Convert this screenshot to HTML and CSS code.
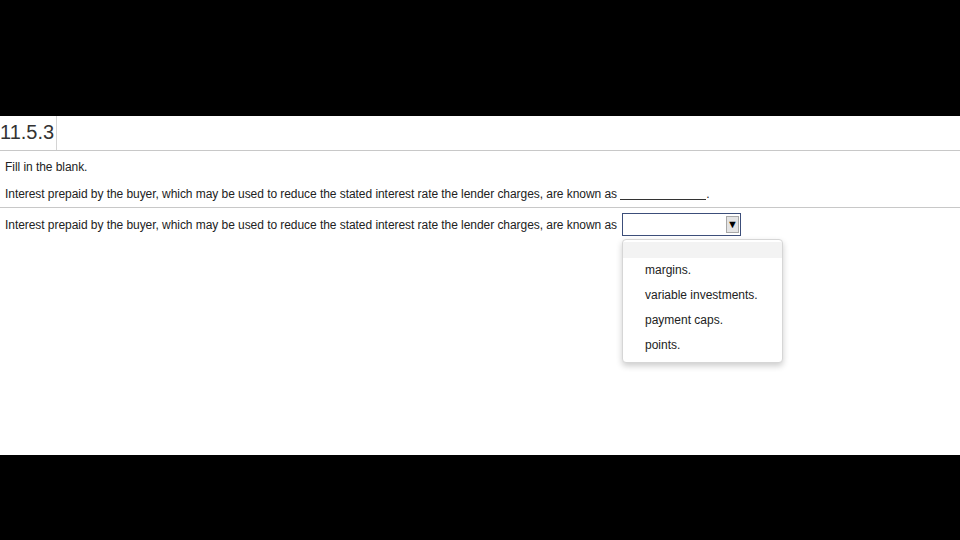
FILE: index.html
```
<!DOCTYPE html>
<html>
<head>
<meta charset="utf-8">
<link rel="stylesheet" href="styles.css">
</head>
<body>
<div class="screen">
  <div class="bar"></div>
  <div class="panel">
    <div class="header">
      <div class="title">11.5.3</div>
    </div>
    <div class="question">
      <p class="instr">Fill in the blank.</p>
      <p class="stem">Interest prepaid by the buyer, which may be used to reduce the stated interest rate the lender charges, are known as <span class="blank"></span>.</p>
    </div>
    <div class="answer">
      <div class="line">
        <span class="stem">Interest prepaid by the buyer, which may be used to reduce the stated interest rate the lender charges, are known as</span>
        <div class="selectwrap">
          <div class="select"><span class="arrow">&#9660;</span></div>
          <ul class="menu">
            <li class="empty"></li>
            <li>margins.</li>
            <li>variable investments.</li>
            <li>payment caps.</li>
            <li>points.</li>
          </ul>
        </div>
      </div>
    </div>
  </div>
  <div class="bar bottom"></div>
</div>
</body>
</html>
```
FILE: styles.css
```
html, body {
  margin: 0;
  padding: 0;
  background: #000;
}
.screen {
  width: 960px;
  height: 540px;
  display: flex;
  flex-direction: column;
  overflow: hidden;
}
.bar {
  height: 116px;
  background: #000;
  flex: none;
}
.bar.bottom {
  height: 85px;
}
.panel {
  height: 339px;
  background: #fff;
  flex: none;
  font-family: "Liberation Sans", Arial, sans-serif;
  color: #222;
}
.header {
  height: 34px;
  border-bottom: 1px solid #c8c8c8;
  display: flex;
}
.title {
  width: 57px;
  box-sizing: border-box;
  border-right: 1px solid #d4d4d4;
  font-size: 20px;
  line-height: 32px;
  padding-left: 0;
  color: #333;
}
.question {
  padding: 9px 0 0 5px;
  border-bottom: 1px solid #c8c8c8;
  height: 47px;
}
.question p,
.line {
  margin: 0;
  font-size: 12px;
  line-height: 14px;
  letter-spacing: -0.055px;
}
.question .stem {
  margin-top: 13px;
}
.blank {
  display: inline-block;
  width: 86px;
  border-bottom: 1px solid #333;
  height: 12px;
  vertical-align: -2px;
}
.answer {
  padding: 5px 0 0 5px;
}
.line {
  display: flex;
  align-items: center;
}
.selectwrap {
  position: relative;
  margin-left: 5px;
}
.select {
  width: 119px;
  height: 23px;
  box-sizing: border-box;
  border: 1px solid #3c4e7a;
  display: flex;
  justify-content: flex-end;
  align-items: center;
  padding-right: 1px;
  background: #fff;
}
.arrow {
  width: 13px;
  height: 17px;
  background: #e4e4e4;
  border: 1px solid #a8a8a8;
  box-sizing: border-box;
  font-size: 11px;
  line-height: 15px;
  text-align: center;
  color: #000;
  letter-spacing: 0;
}
.menu {
  position: absolute;
  left: 0;
  top: 26px;
  width: 161px;
  box-sizing: border-box;
  margin: 0;
  padding: 2px 0 4px 0;
  list-style: none;
  background: #fff;
  border: 1px solid #d6d6d6;
  border-radius: 4px;
  box-shadow: 0 3px 6px rgba(0,0,0,0.2);
}
.menu li {
  font-size: 12px;
  line-height: 25px;
  padding-left: 22px;
  color: #222;
  letter-spacing: 0;
}
.menu li.empty {
  height: 16px;
  background: #f3f3f3;
}
```
